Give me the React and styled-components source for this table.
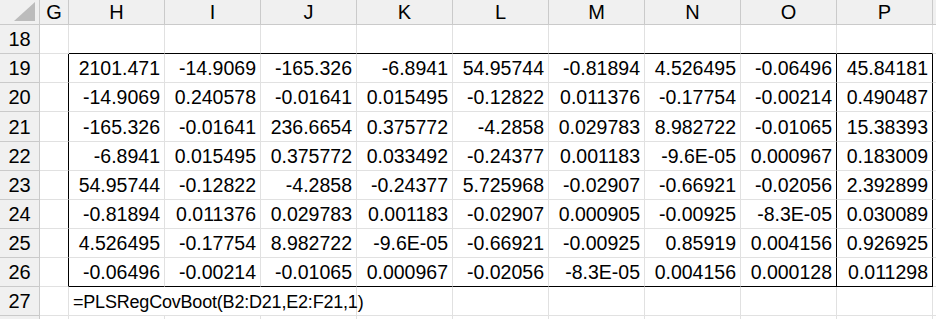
import React from "react";
import styled, { createGlobalStyle } from "styled-components";

const GlobalStyle = createGlobalStyle`
  html, body {
    margin: 0;
    padding: 0;
    background: #ffffff;
    overflow: hidden;
  }
  body {
    font-family: "Liberation Sans", Arial, sans-serif;
  }
`;

const columns = ["G", "H", "I", "J", "K", "L", "M", "N", "O", "P", ""];

const data = [
  ["2101.471", "-14.9069", "-165.326", "-6.8941", "54.95744", "-0.81894", "4.526495", "-0.06496", "45.84181"],
  ["-14.9069", "0.240578", "-0.01641", "0.015495", "-0.12822", "0.011376", "-0.17754", "-0.00214", "0.490487"],
  ["-165.326", "-0.01641", "236.6654", "0.375772", "-4.2858", "0.029783", "8.982722", "-0.01065", "15.38393"],
  ["-6.8941", "0.015495", "0.375772", "0.033492", "-0.24377", "0.001183", "-9.6E-05", "0.000967", "0.183009"],
  ["54.95744", "-0.12822", "-4.2858", "-0.24377", "5.725968", "-0.02907", "-0.66921", "-0.02056", "2.392899"],
  ["-0.81894", "0.011376", "0.029783", "0.001183", "-0.02907", "0.000905", "-0.00925", "-8.3E-05", "0.030089"],
  ["4.526495", "-0.17754", "8.982722", "-9.6E-05", "-0.66921", "-0.00925", "0.85919", "0.004156", "0.926925"],
  ["-0.06496", "-0.00214", "-0.01065", "0.000967", "-0.02056", "-8.3E-05", "0.004156", "0.000128", "0.011298"],
];

const GRID = "#e1e1e1";
const HEAD_LINE = "#cacaca";
const INK = "#000000";

const Sheet = styled.div`
  display: grid;
  grid-template-columns: 40px 29px repeat(9, 96px) 1fr;
  grid-template-rows: 25px 29px 29px 29px 30px repeat(7, 29px);
  width: 936px;
  height: 319px;
  overflow: hidden;
  font-size: 19.5px;
  color: #000;
`;

const Corner = styled.div`
  background: #f0f0f0;
  border-right: 1px solid ${HEAD_LINE};
  border-bottom: 1px solid ${HEAD_LINE};
  display: flex;
  align-items: flex-start;
  justify-content: flex-end;
  padding: 2px 4px 0 0;
`;

const ColHead = styled.div`
  background: #f0f0f0;
  border-right: 1px solid ${HEAD_LINE};
  border-bottom: 1px solid ${HEAD_LINE};
  display: flex;
  align-items: center;
  justify-content: center;
  font-size: 20px;
  line-height: 1;
`;

const RowHead = styled.div`
  background: #f0f0f0;
  border-right: 1px solid ${HEAD_LINE};
  border-bottom: 1px solid ${HEAD_LINE};
  display: flex;
  align-items: center;
  justify-content: center;
  font-size: 20px;
  line-height: 1;
`;

const Cell = styled.div`
  border-right: 1px solid ${(p) => p.$right || GRID};
  border-bottom: 1px solid ${(p) => p.$bottom || GRID};
  display: flex;
  align-items: center;
  justify-content: flex-end;
  padding: 2px 4px 0 0;
  line-height: 1;
  white-space: nowrap;
`;

// formula text spills over H:J like Excel does
const FormulaCell = styled(Cell)`
  grid-column: span 3;
  justify-content: flex-start;
  padding-left: 4px;
  font-size: 18px;
  letter-spacing: -0.2px;
`;

function CornerMark() {
  return (
    <svg width="21" height="19" viewBox="0 0 21 19">
      <polygon points="0,19 21,19 21,0" fill="#bcbcbc" />
    </svg>
  );
}

// table block is H19:P26 -> data columns 1..9, rows 19..26
function cellBorders(row, col) {
  const inBlockRow = row >= 19 && row <= 26;
  const right =
    (col === 0 && inBlockRow) ||
    (inBlockRow && (col === 8 || col === 9))
      ? INK
      : null;
  const bottom = (row === 18 || row === 26) && col >= 1 && col <= 9 ? INK : null;
  return { right, bottom };
}

export default function App() {
  const rows = [];
  for (let r = 18; r <= 28; r++) {
    rows.push(
      <RowHead key={"rh" + r}>{r <= 27 ? r : ""}</RowHead>
    );
    if (r === 27) {
      rows.push(<Cell key={"c27-0"} />);
      rows.push(
        <FormulaCell key={"f27"}>=PLSRegCovBoot(B2:D21,E2:F21,1)</FormulaCell>
      );
      for (let c = 4; c < columns.length; c++) {
        rows.push(<Cell key={"c27-" + c} />);
      }
      continue;
    }
    for (let c = 0; c < columns.length; c++) {
      const { right, bottom } = cellBorders(r, c);
      const value =
        r >= 19 && r <= 26 && c >= 1 && c <= 9 ? data[r - 19][c - 1] : "";
      rows.push(
        <Cell key={"c" + r + "-" + c} $right={right} $bottom={bottom}>
          {value}
        </Cell>
      );
    }
  }

  return (
    <>
      <GlobalStyle />
      <Sheet>
        <Corner>
          <CornerMark />
        </Corner>
        {columns.map((col, i) => (
          <ColHead key={"h" + i}>{col}</ColHead>
        ))}
        {rows}
      </Sheet>
    </>
  );
}
